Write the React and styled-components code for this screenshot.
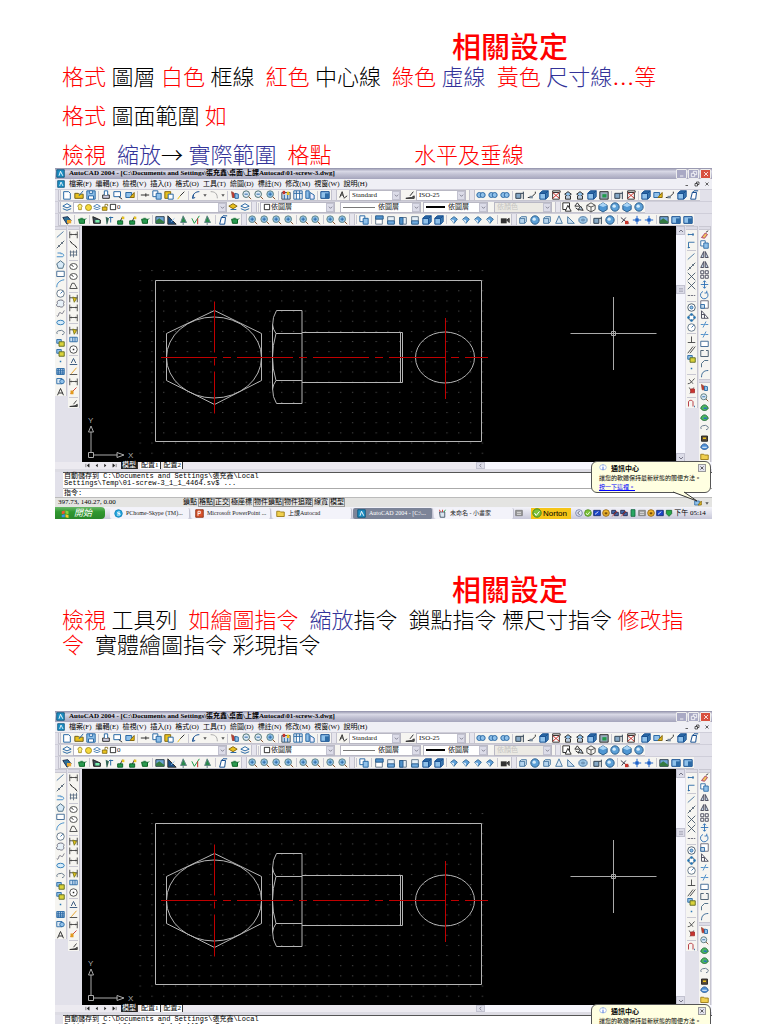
import React from 'react';
import styled, { createGlobalStyle } from 'styled-components';

const cjk = '"Noto Sans CJK TC", sans-serif';
const serif = `"Liberation Serif", ${cjk}`;
const mono = `"Liberation Mono", ${cjk}`;

const GlobalStyle = createGlobalStyle`
    * { box-sizing: border-box; }
    body { margin: 0; background: #fff; }
    button, select { font: inherit; color: inherit; margin: 0; padding: 0; border: 0; background: none; appearance: none; }
`
const Page = styled.main`
    height: 100vh;
    overflow: hidden;
    padding: 31px 56px 0 55px;
    font-family: ${serif};
    color: #000;
`
const Slide = styled.section`
    margin-bottom: 55px;
`
const SlideTitle = styled.h1`
    margin: 0;
    padding-right: 144px;
    text-align: right;
    font-size: 29px;
    line-height: 34px;
    font-weight: 500;
    color: #f00;
`
const Notes = styled.div`
    display: flex;
    flex-direction: column;
    gap: 14px;
    padding: 0 24px 0 7px;
    margin-bottom: ${(props) => (props.$space || '0')};
`
const Line = styled.p`
    margin: 0;
    font-size: 22px;
    line-height: 25px;
    font-weight: 300;
    white-space: pre-wrap;
`
const Ink = styled.span`
    color: ${(props) => (props.color)};
`
const Arrow = styled.span`
    font-family: ${cjk};
    line-height: 0;
`
const Desktop = styled.div`
    position: relative;
    overflow: hidden;
    background: #e2e1ea;
    font-size: 7px;
    line-height: 9px;
    white-space: nowrap;
`
const TitleBar = styled.header`
    display: flex;
    align-items: center;
    height: 11px;
    padding: 0 1px;
    background: linear-gradient(#8f8fa8, #d9d9e6 30%, #c0c0d2 60%, #a5a5bc);
`
const TitleText = styled.strong`
    flex: 1;
    padding-left: 4px;
    font-size: 7px;
`
const CaptionButton = styled.button`
    display: flex;
    align-items: center;
    justify-content: center;
    width: 11px;
    height: 10px;
    margin-left: 1px;
    border: 1px solid #eee;
    border-radius: 1px;
    background: ${(props) => (props.$close ? '#d8503f' : '#a9a9c4')};
    color: #fff;
`
const MenuBar = styled.nav`
    display: flex;
    align-items: center;
    gap: 4px;
    height: 10px;
    padding: 0 2px;
    background: #efeff5;
`
const MenuButton = styled.button`
    height: 10px;
`
const Spacer = styled.div`
    flex: 1;
`
const ToolRow = styled.div`
    display: flex;
    height: ${(props) => (props.$tall ? '13px' : '12px')};
    padding-left: 3px;
    border-top: 1px solid #cfced9;
`
const Strip = styled.div`
    display: flex;
    align-items: center;
    background: #f6f5f1;
    border-bottom: 1px solid #c6c5cf;
`
const Grip = styled.i`
    flex: none;
    width: ${(props) => (props.$wide ? '6px' : '3px')};
    height: 100%;
    border: solid #c3c2ce;
    border-width: 0 1px;
    background: #e6e5ed;
`
const Sep = styled.i`
    flex: none;
    width: 1px;
    height: 9px;
    margin: 0 1px;
    background: #c9c8d2;
`
const ToolButton = styled.button`
    display: flex;
    flex: none;
    align-items: center;
    justify-content: center;
    width: ${(props) => (props.$slim ? '6px' : '12px')};
    height: 11px;
`
const Glyph = styled.svg`
    display: block;
    flex: none;
    width: ${(props) => (props.$size || '11px')};
    height: ${(props) => (props.$size || '11px')};
    overflow: visible;
`
const Combo = styled.label`
    display: flex;
    flex: none;
    align-items: center;
    width: ${(props) => props.$width};
    height: 11px;
    margin-right: ${(props) => (props.$gap || '3px')};
    padding-left: 2px;
    border: 1px solid #b9b8c4;
    background: ${(props) => (props.$off ? '#eceae4' : '#fff')};
    color: ${(props) => (props.$off ? '#b5b5b5' : '#111')};

    select {
        flex: 1;
        min-width: 0;
        height: 9px;
        line-height: 9px;
    }
`
const Rule = styled.i`
    width: ${(props) => (props.$bold ? '19px' : '32px')};
    height: ${(props) => (props.$bold ? '2px' : '1px')};
    margin-right: 3px;
    background: ${(props) => (props.$bold ? '#000' : '#777')};
`
const ArrowBox = styled.span`
    display: flex;
    align-items: center;
    justify-content: center;
    flex: none;
    width: 8px;
    height: 9px;
    background: #dcdce8;
    border: 1px solid #c2c2d0;
`
const Work = styled.div`
    display: flex;
    height: 236px;
`
const Rail = styled.div`
    display: flex;
    flex-direction: column;
    align-items: center;
    width: 12px;
    height: ${(props) => props.$height};
    margin-right: 1px;
    background: #f6f5f1;
    border-right: 1px solid #c6c5cf;
`
const RailGrip = styled.i`
    flex: none;
    width: 100%;
    height: 4px;
    border: solid #c9c8d2;
    border-width: 1px 0;
    background: #dddce6;
`
const RailSep = styled.i`
    flex: none;
    width: 9px;
    height: 1px;
    margin: 1px 0;
    background: #c9c8d2;
`
const RailButton = styled.button`
    display: flex;
    flex: 1;
    min-height: 0;
    align-items: center;
    justify-content: center;
    width: 12px;
`
const Canvas = styled.svg`
    display: block;
    flex: 1;
    min-width: 0;
    height: 236px;
    margin-left: 1px;
    background: #000;
    font-family: "Liberation Sans", sans-serif;
`
const ScrollV = styled.div`
    display: flex;
    flex-direction: column;
    width: 9px;
    margin-right: 1px;
    background: #f6f6fd;
`
const ScrollButton = styled.button`
    display: flex;
    align-items: center;
    justify-content: center;
    width: 9px;
    height: ${(props) => (props.$flat ? '7px' : '9px')};
    background: #dcdce8;
    border: 1px solid #c2c2d0;
`
const ThumbSpace = styled.div`
    flex: 1;
    padding-top: 50px;
`
const Tabs = styled.div`
    display: flex;
    align-items: center;
    height: 7px;
    padding-left: 28px;
    background: #eceaf0;
    line-height: 7px;
`
const NavButton = styled.button`
    display: flex;
    align-items: center;
    justify-content: center;
    width: 9px;
    height: 7px;
`
const Tab = styled.button`
    height: 7px;
    line-height: 7px;
    padding: 0 1px;
    margin-left: 2px;
    border-right: 1px solid #333;
    background: ${(props) => (props.$on ? '#222' : '#fff')};
    color: ${(props) => (props.$on ? '#fff' : '#000')};
`
const HTrack = styled.div`
    width: 227px;
    height: 7px;
    background: #f6f6fd;
`
const Command = styled.div`
    height: 28px;
    padding-left: 8px;
    border-top: 3px solid #dddce4;
    font-family: ${mono};
    line-height: 7px;
`
const CommandLog = styled.pre`
    margin: 0;
    height: 16px;
    padding-left: 1px;
    border-top: 1px solid #555;
    background: #fff;
    font: inherit;
`
const Prompt = styled.div`
    height: 9px;
    padding-left: 1px;
    border-top: 1px solid #aaa;
    background: #fff;
    line-height: 8px;
`
const StatusBar = styled.div`
    display: flex;
    align-items: center;
    height: 10px;
    padding: 0 0 0 3px;
    background: #e4e4e2;
    border-top: 1px solid #bbb;
`
const Coords = styled.span`
    width: 124px;
`
const Mode = styled.button`
    height: 9px;
    line-height: 7px;
    border: 1px solid ${(props) => (props.$on ? '#999' : 'transparent')};
`
const TaskBar = styled.footer`
    display: flex;
    align-items: center;
    height: 12px;
    background: linear-gradient(#f4f4fa, #c9c9da);
`
const Start = styled.button`
    display: flex;
    flex: none;
    align-items: center;
    gap: 4px;
    width: 50px;
    height: 12px;
    margin-right: 5px;
    padding-left: 6px;
    border-radius: 0 4px 4px 0;
    background: linear-gradient(#68b868, #2f982f 40%, #2a862a);
    color: #fff;
    font-size: 9px;
    font-style: italic;
`
const Task = styled.button`
    display: flex;
    flex: none;
    align-items: center;
    gap: 3px;
    width: 80px;
    height: 11px;
    margin-right: 1px;
    padding-left: 4px;
    border-right: 1px solid #c3c3d2;
    border-radius: 2px;
    background: ${(props) => (props.$on ? '#7c8498' : '#f3f3fa')};
    color: ${(props) => (props.$on ? '#fff' : '#222')};
    font-size: 6px;
`
const Norton = styled.button`
    display: flex;
    align-items: center;
    gap: 1px;
    width: 40px;
    height: 11px;
    margin: 0 4px 0 8px;
    padding-left: 1px;
    background: #f5c518;
    font-family: "Liberation Sans", sans-serif;
    font-size: 8px;
`
const Tray = styled.div`
    display: flex;
    flex: 1;
    align-items: center;
    justify-content: space-between;
    padding-right: 6px;
`
const Balloon = styled.aside`
    position: absolute;
    right: 1px;
    bottom: 26px;
    width: 120px;
    height: 32px;
    padding: 1px 4px 0 7px;
    border: 1px solid #555;
    border-radius: 6px;
    background: #ffffe1;
    font-family: ${cjk};
    font-size: 6px;
    line-height: 9px;
`
const BalloonHead = styled.div`
    display: flex;
    align-items: center;
    gap: 4px;
    height: 10px;

    strong { flex: 1; font-size: 7px; }
`
const CloseButton = styled.button`
    display: flex;
    align-items: center;
    justify-content: center;
    width: 8px;
    height: 8px;
    border: 1px solid #999;
    background: #e3e3ee;
`
const BalloonText = styled.div`
    height: 9px;
`
const BalloonLink = styled.a`
    color: #00f;
`
const Tail = styled.svg`
    position: absolute;
    right: 12px;
    top: 29px;
    width: 26px;
    height: 11px;
`

const B = '#2d6ba6';
const L = '#8fc1ea';
const K = '#333';
const G = '#1f9a4a';
const Y = '#e8c11c';
const R = '#c9342c';

// every glyph: list of [path, fill, stroke] on a 12 x 12 grid
const glyphs = {
    page: [['M2 2h6l2 2v7H2z', '#fff', B]],
    open: [['M1 4h4l1 1h5v5H1z', Y, '#77641a'], ['M6 7l5-6', null, B]],
    save: [['M1 1h10v10H1z', L, B], ['M3 7h6v4H3zM4 1h4v3H4z', '#fff', B]],
    print: [['M2 6h8v4H2z', '#ccd', K], ['M4 6V1h4v5', '#fff', B]],
    preview: [['M1 2h8v6H1z', '#fff', B], ['M7 8l4 3', null, K]],
    publish: [['M1 3h7v6H1z', L, B], ['M6 9l5-6v6z', Y, '#8a6b10']],
    cut: [['M1 6h10M7 4v4', null, K]],
    copy: [['M1 1h6v7H1z', '#fff', B], ['M5 4h6v7H5z', L, B]],
    paste: [['M1 2h7v8H1z', Y, '#8a6b10'], ['M5 5h6v6H5z', '#fff', B]],
    brush: [['M2 11l3-4', null, Y], ['M5 7l5-5', null, K]],
    undo: [['M2 10c0-6 4-8 8-8M3 6l-1 4 3-1', null, '#174f91']],
    redo: [['M2 2c5 0 8 2 8 8', null, '#aaa']],
    down: [['M4 5h4l-2 3z', '#555', null]],
    hand: [['M2 2l3 2 1 5H3z', R, '#9a4a3a'], ['M6 4l4 1v5l-4 0z', L, B]],
    zoom: [['M1 5a4 4 0 1 0 8 0a4 4 0 1 0-8 0', L, '#688'], ['M8 8l3 3', null, '#853'], ['M3 5h4M5 3v4', null, B]],
    zoomw: [['M1 5a4 4 0 1 0 8 0a4 4 0 1 0-8 0', '#dbe9f5', '#577'], ['M8 8l3 3', null, '#853'], ['M3 5h4', null, B]],
    props: [['M1 3h10v8H1z', '#cde', '#456'], ['M2 1h3v4H2z', R, null], ['M7 2h3v4H7z', Y, null], ['M4 6v5M8 6v5', null, B]],
    grid: [['M1 1h10v10H1z', '#fff', B], ['M1 4h10M4 1v10M8 1v10', null, B]],
    palette: [['M1 1h4v9H1z', L, B], ['M6 3l5 3v5H6z', '#eef', B]],
    web: [['M1 2h10v8H1z', L, '#174f91'], ['M6 4h5v6H6z', B, null]],
    textStyle: [['M2 9l3-7 2 7M3 6h3', null, K], ['M7 10l4-3', null, K]],
    dimStyle: [['M1 10h10V7L8 9z', '#666', K], ['M6 7l4-5', null, K]],
    union: [['M1 6a3 3 0 1 0 6 0a3 3 0 1 0-6 0', L, B], ['M5 6a3 3 0 1 0 6 0a3 3 0 1 0-6 0', L, B]],
    solidA: [['M1 4h6v6H1z', '#86a9c6', '#345'], ['M7 4h3M10 2v9', null, '#345']],
    solidB: [['M1 9h4l5-5V2', null, K], ['M3 7h4v3H3z', '#789', null]],
    cube: [['M1 4h7v7H1z', L, '#174f91'], ['M1 4l3-3h7L8 4z', B, '#174f91'], ['M11 1v7l-3 3V4z', '#417fb5', '#174f91']],
    cubeR: [['M2 3h8v8H2z', '#fff', K], ['M2 3l8 7M10 3l-8 7', null, R], ['M2 3V1h9v2', null, K]],
    faces: [['M2 5l4-3 4 3-4 3z', L, K], ['M3 7v4h6V7', '#bcd', K]],
    cubeG: [['M1 2h10v9H1z', '#9ab', K], ['M4 5h5v4H4z', G, null]],
    layers: [['M1 5l5-3 5 3-5 2z', '#fff', B], ['M1 8l5 2 5-2', null, B]],
    bulb: [['M4 7a3 3 0 1 1 4 0v3H4z', '#fff27a', '#997f11']],
    sun: [['M2 6a4 4 0 1 0 8 0a4 4 0 1 0-8 0', '#f6d93b', '#a38a1a']],
    lock: [['M2 6h7v5H2z', Y, '#7c660f'], ['M6 6V2h4v3', null, '#7c660f']],
    swatch: [['M2 2h8v8H2z', '#fff', '#000']],
    layerPrev: [['M1 5l5-3 5 3-5 3z', Y, '#8a6b10'], ['M3 9h7', null, B]],
    shadeA: [['M1 1h8v8H1z', '#fff', K], ['M4 11l3-7 4 7z', '#fff', K]],
    shadeB: [['M1 5l3-4 3 4z', '#fff', K], ['M5 9l3-4 3 5z', '#bcd', K], ['M2 7l4 3', null, K]],
    wire: [['M1 4l5-3 5 3v5l-5 3-5-3zM1 4l5 2 5-2M6 6v6', null, '#555']],
    gem: [['M1 4l5-3 5 3v5l-5 3-5-3z', '#4f97d3', '#2d5f8e'], ['M1 4l5 2 5-2-5-3z', '#a9d4f5', null]],
    ball: [['M1 6a5 5 0 1 0 10 0a5 5 0 1 0-10 0', '#5da1d8', '#2d5f8e'], ['M3 5a2 2 0 1 0 4 0a2 2 0 1 0-4 0', '#d6ecfb', null]],
    teapot: [['M2 5h7v5H3z', '#2a9a50', '#0b6426'], ['M9 6l2-2M4 4h3', null, '#157a3a']],
    render: [['M1 2l9 4v4H2z', '#3c4a55', '#222'], ['M4 6h5v3H4z', '#7ea', null]],
    renderO: [['M1 3l6-1 4 5-5 4z', '#2e6f94', '#235'], ['M6 6h5v4H6z', '#e8a52c', null]],
    light: [['M2 2l4 2-2 7H3z', '#365', null], ['M6 3h5M8 2v7', null, B]],
    mat: [['M3 11l5-9', null, K], ['M2 7h6v4H2z', G, '#14632f'], ['M7 2h3v3H7z', Y, null]],
    scene: [['M1 2h10v8H1z', '#6ea6d8', '#345'], ['M1 7l4-3 6 4v2H1z', '#347a42', null]],
    fog: [['M1 1v10h10z', '#1b4f86', K], ['M5 8l4-4', null, L]],
    tree: [['M5 1l4 8H2zM5 9v3', '#298b4c', '#688']],
    check: [['M1 4l3 6 6-9', null, G], ['M8 4v7', null, R]],
    vbox: [['M4 3h5l-1 8H2zM4 3l2-2h5', '#fff', '#174f91']],
    view: [['M2 3h8v8H2z', '#fff', '#6b7d90'], ['M2 1h9v4H2z', '#4f92cc', '#2d5f8e']],
    viewL: [['M2 3h8v8H2z', '#e8f1f8', '#6b7d90'], ['M2 3h4v8H2z', '#4f92cc', '#2d5f8e']],
    viewB: [['M2 2h8v8H2z', '#e8f1f8', '#6b7d90'], ['M2 7h8v4H2z', '#6fabe0', '#2d5f8e']],
    iso: [['M2 5l4-3 4 3-4 5z', '#5fa2dc', '#3c6f9c'], ['M2 5l4 1 0 4z', '#d5e8f6', null]],
    camera: [['M1 4h7v6H1z', '#333', null], ['M8 6l3-2v5z', '#555', K]],
    box: [['M2 4h6v6H2z', '#b5d5ef', '#5580a8'], ['M2 4l2-2h6v6l-2 2V4z', '#dcebf7', '#5580a8']],
    cone: [['M6 1l4 9H2z', '#dcebf7', '#5580a8']],
    torus: [['M1 6a5 4 0 1 0 10 0a5 4 0 1 0-10 0', '#9cc6e6', '#5580a8'], ['M4 6a2 1 0 1 0 4 0a2 1 0 1 0-4 0', '#fff', '#5580a8']],
    wedge: [['M2 2l8 8H2z', '#cfe3f4', '#5580a8']],
    move3: [['M6 1v10M1 6h10', null, '#1e63c9'], ['M4 4h4v4H4z', '#1e63c9', null]],
    slice: [['M1 3l6 5 4 2M2 9l5-6', null, '#445'], ['M6 7h4v4H6z', R, null]],
    line: [['M1 10l9-8', null, '#46749f']],
    cline: [['M1 11L11 1M3 7l2 2M7 3l2 2', null, '#46586a']],
    pline: [['M1 9h7c3 0 3-4 0-4H6M2 4h5', null, '#3585c6']],
    poly: [['M6 1l5 4-2 6H3L1 5z', '#d8eaf7', '#44667f']],
    rect: [['M1 3h10v7H1z', '#fff', '#3a6390']],
    arc: [['M1 11C1 5 5 2 11 1', null, '#3585c6']],
    circle: [['M1 6a5 5 0 1 0 10 0a5 5 0 1 0-10 0', '#fff', '#5d7183'], ['M6 6l3-3', null, B]],
    cloud: [['M3 2c6-2 9 1 7 4 2 4-3 6-5 4-5 1-5-3-3-4-1-2 0-3 1-4', '#e8f1f8', '#667']],
    spline: [['M1 9c3 3 2-6 5-4s2 2 5-3', null, '#667']],
    ellipse: [['M1 6a5 3 0 1 0 10 0a5 3 0 1 0-10 0', '#d7ecfa', '#2777b5']],
    earc: [['M2 8a5 3 0 1 1 6 1', null, '#5d7183']],
    block: [['M1 2h6v5H1z', L, B], ['M4 5h7v6H4z', '#d9d23a', '#5d6a22']],
    dot: [['M5 5h2v2H5z', '#2777b5', null]],
    hatch: [['M1 2h10v8H1z', '#a9c6e4', B], ['M3 2v8M6 2v8M9 2v8M1 5h10M1 8h10', null, B]],
    region: [['M1 2h7v7H1z', '#dbe9f5', B], ['M5 6a3 3 0 1 0 6 0a3 3 0 1 0-6 0', L, B]],
    mtext: [['M2 11l4-9 4 9M4 8h5', null, '#222']],
    dim: [['M1 2v9M11 2v9M1 6h10M3 5v2M9 5v2', null, '#444']],
    dimA: [['M2 3l8 6M1 1l3 3M8 8l3 3', null, '#333']],
    ord: [['M2 10V2M1 8h10M6 2v9M10 1v8M1 4h10', null, '#5d7183']],
    radius: [['M1 6a5 4 0 1 0 10 0a5 4 0 1 0-10 0', '#fff', '#444'], ['M6 6L3 4', null, '#222']],
    angle: [['M1 10h10L7 3H4z', null, '#444']],
    quick: [['M1 1v10M11 1v10M1 5h10', null, '#444'], ['M5 4l5 2-3 5z', Y, '#7b7b18']],
    tol: [['M1 3h10v6H1zM5 3v6M8 3v6', '#c9def2', B]],
    mark: [['M1 6a5 5 0 1 0 10 0a5 5 0 1 0-10 0', '#fff', '#444'], ['M5 5h2v2H5z', '#222', null]],
    dimEdit: [['M3 8l3-6 3 6M1 10h10', null, '#2d4f77']],
    pencil: [['M3 9l7-8', null, '#e39a1c'], ['M1 10h10', null, '#444']],
    update: [['M2 10l8-8', null, R], ['M2 6h4v5H2z', '#e39a1c', null]],
    snapT: [['M1 6h8M8 4v4M2 5v2', null, B]],
    snapF: [['M2 11V3h8M1 10h3', null, B]],
    cross: [['M1 1l10 10M11 1L1 11', null, '#46586a']],
    dash: [['M1 6h3M5 6h3M9 6h2', null, '#667']],
    center: [['M1 6a5 5 0 1 0 10 0a5 5 0 1 0-10 0', '#fff', '#456'], ['M4 6a2 2 0 1 0 4 0a2 2 0 1 0-4 0', L, B]],
    quad: [['M2 6a4 4 0 1 0 8 0a4 4 0 1 0-8 0', '#fff', '#456'], ['M5 1h2v2H5zM5 9h2v2H5zM1 5h2v2H1zM9 5h2v2H9z', '#2777b5', '#2777b5']],
    perp: [['M1 10h10M6 2v8', null, '#444']],
    para: [['M1 11L8 2M4 11l7-9', null, '#444']],
    near: [['M1 9c4 0 5-3 9-7M3 3l5 6', null, '#444']],
    noSnap: [['M3 2l3 5M9 2l-5 8', null, '#444'], ['M5 4h5v5H5z', R, '#a33']],
    magnet: [['M2 10V4c0-3 6-3 6 0v6', null, '#b22f37'], ['M10 9v2', null, B]],
    erase: [['M2 10l5-6 3 2-4 5z', '#f0c85a', '#a36'], ['M8 3l3-2', null, K]],
    mirror: [['M5 2v8H1zM7 2v8h4z', '#c7d9ea', '#445']],
    array: [['M1 1h4v4H1zM7 1h4v4H7zM1 7h4v4H1zM7 7h4v4H7z', '#fff', '#445']],
    move: [['M6 1v10M1 6h10M4 3l2-2 2 2M4 9l2 2 2-2', null, '#2c6fb4']],
    rotate: [['M4 2a5 5 0 1 0 5 1M9 1v3H6', null, '#2c6fb4']],
    scale: [['M1 1h10v10H1z', '#fff', '#667'], ['M1 6h5v5H1z', '#c7d9ea', B]],
    stretch: [['M2 1v10h9zM2 6h4v5', '#fff', '#445']],
    trim: [['M1 6h4M7 6h4M4 10l4-8', null, '#3f86c5']],
    brk: [['M5 2H1v8h10V2H8', null, '#44586a']],
    chamfer: [['M2 11V6l4-4h5', null, '#44667f']],
    fillet: [['M2 11C2 5 5 2 11 2', null, '#2d5f8e']],
    orbit: [['M1 7c2-6 8-6 10 0-2 4-8 4-10 0', '#4bb760', '#16622b'], ['M5 6h4v2H5z', '#2a6fc0', null]],
    world: [['M1 7c2-6 8-6 10 0-2 4-8 4-10 0', '#4b8fd7', '#24528f'], ['M3 7h6', null, '#fff']],
    eye: [['M2 4h8v7H2z', '#5a4a38', '#222'], ['M4 6h4v2H4z', Y, null]],
    folder: [['M1 3h4l1 1h5v6H1z', '#f0cf4e', '#9a7a16']],
    cad: [['M1 1h10v10H1z', '#1e8fc4', '#0e567c'], ['M4 9l2-6 3 6', null, '#fff']],
    ppt: [['M1 1h10v10H1z', '#d9532c', '#8a2c12'], ['M4 9V3h3v3H4', null, '#fff']],
    skype: [['M1 6a5 5 0 1 0 10 0a5 5 0 1 0-10 0', '#25a7e0', '#1585ba'], ['M8 4H5v2h3v2H4', null, '#fff']],
    paint: [['M2 4h7v7H3z', '#d9e4ee', '#456'], ['M3 4L2 1M6 4V1', null, R], ['M8 4l2-3', null, G]],
    flag: [['M1 3l4-1v4L1 7z', '#f0562c', null], ['M6 2l4 1v4L6 6z', '#8bd13f', null], ['M1 8l4-1v4l-4 0z', '#3b8ff0', null], ['M6 7l4 1v4l-4-1z', '#f5cc2a', null]],
    ok: [['M1 6a5 5 0 1 0 10 0a5 5 0 1 0-10 0', '#7cc23a', '#4b8a1b'], ['M3 6l2 3 4-5', null, '#fff']],
    keys: [['M1 2h10v8H1z', '#999', '#777'], ['M3 5h6M3 8h6', null, '#eee']],
    back: [['M1 6a5 5 0 1 0 10 0a5 5 0 1 0-10 0', '#dfe4f2', '#6875a3'], ['M7 3L4 6l3 3', null, '#445']],
    net: [['M1 2h6v5H1zM5 5h6v5H5z', '#4668a8', '#224'], ['M2 11L9 3', null, R]],
    shield: [['M2 2h8v5l-4 4-4-4z', '#28a745', '#14632f']],
    amber: [['M1 6a5 5 0 1 0 10 0a5 5 0 1 0-10 0', '#f0b62e', '#8a5d0d'], ['M4 5h4v3H4z', '#734a0c', null]],
    blue: [['M1 2h10v8H1z', '#1c46c8', '#0f2668'], ['M3 8l5-4', null, '#fff']],
    green: [['M3 1h6v10H3z', '#28a763', '#14633f']],
    info: [['M1 5a5 4 0 1 0 10 0a5 4 0 1 0-10 0', '#fff', '#9bb3e0'], ['M6 4v5M6 1v1', null, '#2456d8']],
    min: [['M3 9h5', null, 'currentColor']],
    max: [['M2 5h5v5H2zM5 5V2h5v5H7', null, 'currentColor']],
    close: [['M3 3l6 6M9 3l-6 6', null, 'currentColor']],
    chev: [['M2 4l4 4 4-4', null, '#334']],
    chevUp: [['M2 8l4-4 4 4', null, '#334']],
    chevLeft: [['M8 2L4 6l4 4', null, '#334']],
    grab: [['M2 3h8M2 6h8M2 9h8', null, '#99a']],
    first: [['M2 2v8M10 2v8L5 6z', '#222', '#222']],
    prev: [['M9 2v8L4 6z', '#222', null]],
    next: [['M3 2v8l5-4z', '#222', null]],
    last: [['M10 2v8M2 2v8l5-4z', '#222', '#222']],
};

function Icon({name, size}){
    return (
        <Glyph viewBox='0 0 12 12' $size={size} aria-hidden='true'>
            {glyphs[name].map(([d, fill, stroke], index) => (
                <path key={index} d={d} fill={fill || 'none'} stroke={stroke || 'none'} strokeWidth='1.2' />))}
        </Glyph>
    );
}

// "|" is a separator, "||" a grip between two toolbars
function Tools({items}){
    return items.split(' ').map((name, index) => {
        if (name === '|') return <Sep key={index} />;
        if (name === '||') return <Grip key={index} $wide />;
        return (
            <ToolButton key={index} type='button' aria-label={name} $slim={name === 'down'}>
                <Icon name={name} size='10px' />
            </ToolButton>
        );
    });
}

function ToolRail({items, height}){
    return (
        <Rail $height={height}>
            <RailGrip />
            {items.split(' ').map((name, index) => {
                if (name === '|') return <RailSep key={index} />;
                if (name === '||') return <RailGrip key={index} />;
                return <RailButton key={index} type='button' aria-label={name}><Icon name={name} size='9px' /></RailButton>;
            })}
        </Rail>
    );
}

function Picker({label, value, width, gap, off, children}){
    return (
        <Combo $width={width} $gap={gap} $off={off}>
            {children}
            <select aria-label={label} disabled={off}>
                <option>{value}</option>
            </select>
            <ArrowBox><Icon name='chev' size='5px' /></ArrowBox>
        </Combo>
    );
}

function Drawing(){
    return (
        <Canvas viewBox='0 0 594 236' role='img' aria-label='螺栓'>
            <defs>
                <pattern id='dots' x='57.5' y='44' width='11.8' height='10.15' patternUnits='userSpaceOnUse'>
                    <rect width='1.3' height='1' fill='#484848' />
                </pattern>
            </defs>
            <rect x='57' y='44' width='351' height='186' fill='url(#dots)' />
            <g fill='none' stroke='#b4b4b4' strokeWidth='1'>
                <path d='M73.5 54.5h326v161h-326z' />
                <path d='M132.5 84.5l47 23v47l-47 24-48-24v-47z' />
                <ellipse cx='132' cy='131.5' rx='47.5' ry='40.5' />
                <path d='M194.5 84.5h25.5v93h-25.5q-4-6-4-15.5v-62q0-9.5 4-15.5z' />
                <path d='M220 107.5h-26q-3-4-3.5-9M194 107.5q-7 24 0 47h26M194 154.5q-3 4-3.5 9' />
                <path d='M220 106.5h100.5v50H220M318.5 106.5v50' />
                <ellipse cx='363' cy='131.5' rx='29.5' ry='25.5' />
            </g>
            <g fill='none' stroke='#c00000' strokeWidth='1'>
                <path d='M79 131.5h327' strokeDasharray='56 6 8 6' />
                <path d='M132.5 75.5v112' strokeDasharray='51 6 7 6' />
                <path d='M363.5 92v81' />
            </g>
            <g fill='none' stroke='#aaa'>
                <path d='M488.5 107.5h86M531.5 71v73M529.5 105.5h4v4h-4z' />
                <path d='M6.5 226.5h5v5h-5zM9 226v-20M11.5 229h24M6.5 206l2.5-6 2.5 6zM35 226.5l7 2.5-7 2.5z' />
            </g>
            <text x='6' y='197' fill='#aaa' fontSize='8'>Y</text>
            <text x='46' y='232' fill='#aaa' fontSize='8'>X</text>
        </Canvas>
    );
}

const menus = ['檔案(F)', '編輯(E)', '檢視(V)', '插入(I)', '格式(O)', '工具(T)', '繪圖(D)', '標註(N)', '修改(M)', '視窗(W)', '說明(H)'];
const modes = [['鎖點', false], ['格點', true], ['正交', true], ['極座標', false], ['物件鎖點', true], ['物件追蹤', true], ['線寬', false], ['模型', true]];
const tasks = [['skype', 'PChome-Skype (TM)...'], ['ppt', 'Microsoft PowerPoint ...'], ['folder', '上課Autocad'], ['cad', 'AutoCAD 2004 - [C:\\...'], ['paint', '未命名 - 小畫家']];
const tray = ['back', 'ok', 'blue', 'amber', 'net', 'net', 'green', 'keys', 'amber', 'blue', 'shield'];

function AutoCad(){
    return (
        <Desktop>
            <TitleBar>
                <Icon name='cad' size='9px' />
                <TitleText>{'AutoCAD 2004 - [C:\\Documents and Settings\\張充鑫\\桌面\\上課Autocad\\01-screw-3.dwg]'}</TitleText>
                <CaptionButton type='button' aria-label='最小化'><Icon name='min' size='8px' /></CaptionButton>
                <CaptionButton type='button' aria-label='還原'><Icon name='max' size='8px' /></CaptionButton>
                <CaptionButton type='button' aria-label='關閉' $close><Icon name='close' size='8px' /></CaptionButton>
            </TitleBar>
            <MenuBar>
                <Icon name='cad' size='8px' />
                {menus.map((name) => <MenuButton key={name} type='button'>{name}</MenuButton>)}
                <Spacer />
                <Icon name='min' size='6px' /><Icon name='max' size='6px' /><Icon name='close' size='6px' />
            </MenuBar>
            <ToolRow>
                <Strip>
                    <Grip />
                    <Tools items='page open save | print preview publish | cut copy paste brush | undo down redo down | hand zoomw zoomw zoom | props grid palette | web || textStyle' />
                    <Picker label='字型' value='Standard' width='52px' />
                    <Tools items='dimStyle' />
                    <Picker label='標註型式' value='ISO-25' width='50px' />
                    <Tools items='|| union union union | solidA solidB cube cubeR faces faces cube cubeG | solidA cubeR | cube publish solidB cube vbox' />
                </Strip>
            </ToolRow>
            <ToolRow>
                <Strip>
                    <Grip />
                    <Tools items='layers' />
                    <Picker label='圖層' value='0' width='154px' gap='0'>
                        <Icon name='bulb' size='8px' /><Icon name='sun' size='9px' /><Icon name='layers' size='8px' />
                        <Icon name='lock' size='8px' /><Icon name='swatch' size='8px' />
                    </Picker>
                    <Tools items='layerPrev layers || |' />
                    <Picker label='顏色' value='依圖層' width='75px' gap='5px'><Icon name='swatch' size='8px' /></Picker>
                    <Picker label='線型' value='依圖層' width='81px' gap='2px'><Rule /></Picker>
                    <Picker label='線寬' value='依圖層' width='65px' gap='6px'><Rule $bold /></Picker>
                    <Picker label='出圖型式' value='依顏色' width='58px' off />
                    <Tools items='|| shadeA shadeB wire gem ball gem ball' />
                </Strip>
            </ToolRow>
            <ToolRow $tall>
                <Strip>
                    <Grip />
                    <Tools items='renderO | teapot | render light mat mat teapot | scene fog tree check tree | vbox teapot || zoom zoom zoom zoom | zoom zoom | zoom zoom || | copy | view viewB viewL viewB cube cube | iso iso iso iso | camera || box ball box cone wedge torus | solidA ball | slice move3 move3 | scene web web' />
                </Strip>
            </ToolRow>
            <Work>
                <ToolRail height='170px' items='line cline pline poly rect arc circle cloud spline ellipse earc block block dot hatch region mtext' />
                <ToolRail height='182px' items='dim dimA ord | radius radius angle | quick dim dim | quick tol mark | dimEdit pencil dim update | dimStyle' />
                <Drawing />
                <ScrollV>
                    <ScrollButton type='button' aria-label='向上'><Icon name='chevUp' size='6px' /></ScrollButton>
                    <ThumbSpace><ScrollButton type='button' aria-label='捲軸'><Icon name='grab' size='6px' /></ScrollButton></ThumbSpace>
                    <ScrollButton type='button' aria-label='向下'><Icon name='chev' size='6px' /></ScrollButton>
                </ScrollV>
                <ToolRail height='182px' items='snapT snapF | line cline cross cross dash | center quad circle | perp para block dot | near noSnap | magnet' />
                <ToolRail height='236px' items='erase copy mirror mirror array move rotate scale stretch trim trim rect brk chamfer fillet || hand zoomw orbit orbit earc eye world folder' />
            </Work>
            <Tabs>
                {['first', 'prev', 'next', 'last'].map((name) => (
                    <NavButton key={name} type='button' aria-label={name}><Icon name={name} size='5px' /></NavButton>))}
                <Tab type='button' $on>模型</Tab>
                <Tab type='button'>配置1</Tab>
                <Tab type='button'>配置2</Tab>
                <Spacer />
                <ScrollButton type='button' aria-label='向左' $flat><Icon name='chevLeft' size='5px' /></ScrollButton>
                <HTrack />
            </Tabs>
            <Command>
                <CommandLog>{'自動儲存到 C:\\Documents and Settings\\張充鑫\\Local\nSettings\\Temp\\01-screw-3_1_1_4464.sv$ ...'}</CommandLog>
                <Prompt>指令:</Prompt>
            </Command>
            <StatusBar>
                <Coords>397.73, 140.27, 0.00</Coords>
                {modes.map(([name, on]) => <Mode key={name} type='button' $on={on}>{name}</Mode>)}
                <Spacer />
                <Icon name='publish' size='8px' />
                <Icon name='down' size='10px' />
            </StatusBar>
            <TaskBar>
                <Start type='button'><Icon name='flag' size='9px' />開始</Start>
                {tasks.map(([icon, name]) => (
                    <Task key={name} type='button' $on={icon === 'cad'}><Icon name={icon} size='9px' />{name}</Task>))}
                <Icon name='keys' size='8px' />
                <Norton type='button'><Icon name='ok' size='10px' />Norton</Norton>
                <Tray>
                    {tray.map((name, index) => <Icon key={index} name={name} size='8px' />)}
                    <span>下午 05:14</span>
                </Tray>
            </TaskBar>
            <Balloon>
                <BalloonHead>
                    <Icon name='info' size='8px' />
                    <strong>通訊中心</strong>
                    <CloseButton type='button' aria-label='關閉'><Icon name='close' size='6px' /></CloseButton>
                </BalloonHead>
                <BalloonText>讓您的軟體保持最新狀態的簡便方法。</BalloonText>
                <BalloonLink href='#more'>按一下這裡。</BalloonLink>
                <Tail viewBox='0 0 26 11' aria-hidden='true'>
                    <path d='M1 1l24 9-13-9' fill='#ffffe1' stroke='#333' />
                </Tail>
            </Balloon>
        </Desktop>
    );
}

const red = '#f00';
const blue = '#333399';

function App(){
    return (
        <Page lang='zh-Hant'>
            <GlobalStyle />
            <Slide>
                <SlideTitle>相關設定</SlideTitle>
                <Notes>
                    <Line>
                        <Ink color={red}>格式</Ink>{' 圖層 '}<Ink color={red}>白色</Ink>{' 框線  '}<Ink color={red}>紅色</Ink>{' 中心線  '}
                        <Ink color={red}>綠色</Ink> <Ink color={blue}>虛線</Ink>{'  '}<Ink color={red}>黃色</Ink> <Ink color={blue}>尺寸線</Ink><Ink color={red}>…等</Ink>
                    </Line>
                    <Line><Ink color={red}>格式</Ink>{' 圖面範圍 '}<Ink color={red}>如</Ink></Line>
                    <Line>
                        <Ink color={red}>檢視</Ink>{'  '}<Ink color={blue}>縮放</Ink><Arrow>→</Arrow> <Ink color={blue}>實際範圍</Ink>{'  '}
                        <Ink color={red}>{'格點               水平及垂線'}</Ink>
                    </Line>
                </Notes>
                <AutoCad />
            </Slide>
            <Slide>
                <SlideTitle>相關設定</SlideTitle>
                <Notes $space='53px'>
                    <Line>
                        <Ink color={red}>檢視</Ink>{' 工具列  '}<Ink color={red}>如繪圖指令</Ink>{'  '}<Ink color={blue}>縮放</Ink>{'指令  鎖點指令 標尺寸指令 '}
                        <Ink color={red}>修改指令</Ink>{'  實體繪圖指令 彩現指令'}
                    </Line>
                </Notes>
                <AutoCad />
            </Slide>
        </Page>
    );
}

export default App;
